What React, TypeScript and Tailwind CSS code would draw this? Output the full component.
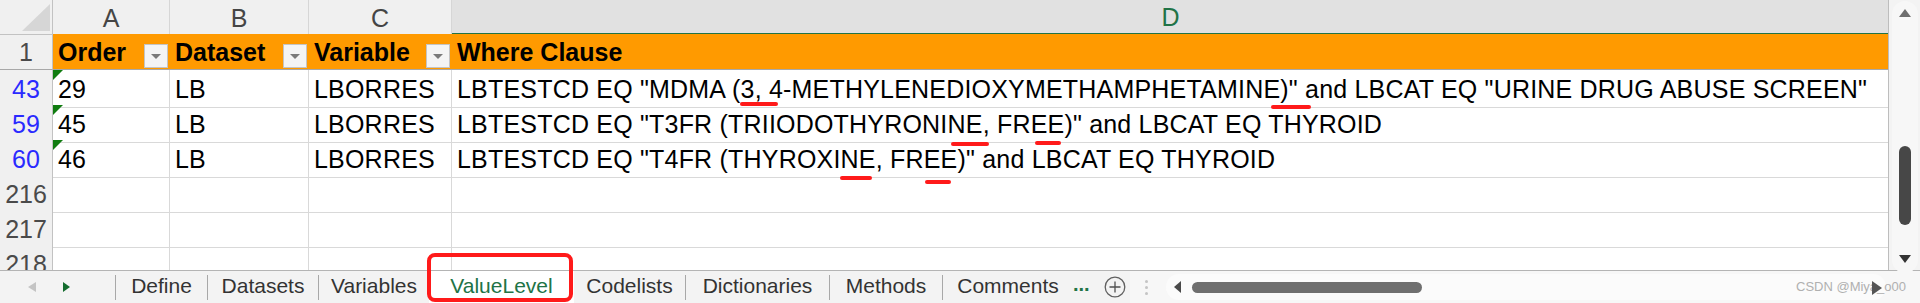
import React from "react";

const FONT = { fontFamily: '"Liberation Sans", Arial, sans-serif' };

function FilterBtn() {
  return (
    <div className="absolute right-[2px] top-[10px] w-[24px] h-[24px] bg-[#f4f4f4] border border-[#c4c4c4] flex items-center justify-center">
      <div className="w-0 h-0 border-l-[5px] border-r-[5px] border-t-[5px] border-l-transparent border-r-transparent border-t-[#7a7a7a] mt-[1px]" />
    </div>
  );
}

function GreenTri() {
  return (
    <div className="absolute left-0 top-0 w-0 h-0 border-t-[10px] border-r-[10px] border-t-[#107c10] border-r-transparent" />
  );
}

const GRID = "grid grid-cols-[53px_117px_139px_143px_1437px]";

type Row = { n: string; blue?: boolean; cells?: string[]; tri?: boolean };

const rows: Row[] = [
  {
    n: "43",
    blue: true,
    tri: true,
    cells: [
      "29",
      "LB",
      "LBORRES",
      'LBTESTCD EQ "MDMA (3, 4-METHYLENEDIOXYMETHAMPHETAMINE)" and LBCAT EQ "URINE DRUG ABUSE SCREEN"',
    ],
  },
  {
    n: "59",
    blue: true,
    tri: true,
    cells: ["45", "LB", "LBORRES", 'LBTESTCD EQ "T3FR (TRIIODOTHYRONINE, FREE)" and LBCAT EQ THYROID'],
  },
  {
    n: "60",
    blue: true,
    tri: true,
    cells: ["46", "LB", "LBORRES", 'LBTESTCD EQ "T4FR (THYROXINE, FREE)" and LBCAT EQ THYROID'],
  },
  { n: "216" },
  { n: "217" },
  { n: "218" },
];

function DataRow({ r, last }: { r: Row; last?: boolean }) {
  const h = last ? "h-[25px]" : "h-[35px]";
  return (
    <div className={`${GRID} ${h} shrink-0`}>
      <div
        className={`border-r border-b border-[#c2c2c2] bg-[#f0f0f0] text-center pt-[2px] leading-[35px] text-[25px] ${
          r.blue ? "text-[#2a2aff]" : "text-[#4a4a4a]"
        }`}
      >
        {r.n}
      </div>
      {[0, 1, 2, 3].map((i) => (
        <div
          key={i}
          className="relative border-r border-b border-[#d9d9d9] pl-[5px] pt-[2px] leading-[35px] text-[25px] tracking-[0.2px] text-black whitespace-nowrap overflow-visible"
        >
          {i === 0 && r.tri ? <GreenTri /> : null}
          {r.cells ? r.cells[i] : ""}
        </div>
      ))}
    </div>
  );
}

function Tab({ w, label, active }: { w: string; label: string; active?: boolean }) {
  return (
    <div
      className={`${w} h-full flex items-center justify-center text-[21px] pb-[2px] shrink-0 ${
        active ? "bg-white text-[#217346]" : "text-[#333]"
      }`}
    >
      {label}
    </div>
  );
}

function Sep() {
  return <div className="w-[1px] h-[25px] bg-[#a8a8a8] self-center shrink-0" />;
}

export default function App() {
  return (
    <div className="relative w-[1920px] h-[303px] overflow-hidden bg-white flex flex-col" style={FONT}>
      <div className="flex h-[270px] shrink-0">
        {/* grid */}
        <div className="w-[1889px] flex flex-col border-r border-[#bdbdbd] overflow-hidden">
          {/* column headers */}
          <div className={`${GRID} h-[34px] shrink-0`}>
            <div className="relative bg-[#f0f0f0] border-r border-b border-[#c2c2c2]">
              <svg className="absolute left-[22px] top-[4px]" width="28" height="27" viewBox="0 0 28 27">
                <polygon points="28,0 28,27 0,27" fill="#d6d6d6" />
              </svg>
            </div>
            {["A", "B", "C"].map((c) => (
              <div
                key={c}
                className="bg-[#f0f0f0] border-r border-b border-r-[#d6d6d6] border-b-[#ababab] text-center text-[25px] text-[#454545] pt-[3px] leading-[31px]"
              >
                {c}
              </div>
            ))}
            <div className="bg-[#e1e1e1] border-b-2 border-[#217346] text-center text-[25px] text-[#217346] pt-[3px] leading-[29px]">
              D
            </div>
          </div>
          {/* header row 1 */}
          <div className={`${GRID} h-[36px] shrink-0`}>
            <div className="bg-[#f0f0f0] border-r border-b border-r-[#c2c2c2] border-b-[#a8a8a8] text-center pt-[2px] leading-[33px] text-[25px] text-[#4a4a4a]">
              1
            </div>
            {["Order", "Dataset", "Variable", "Where Clause"].map((t, i) => (
              <div
                key={t}
                className="relative bg-[#ff9a00] border-b border-[#a8a8a8] pl-[5px] pt-[2px] leading-[33px] text-[25px] font-bold text-black whitespace-nowrap"
              >
                {t}
                {i < 3 ? <FilterBtn /> : null}
              </div>
            ))}
          </div>
          {rows.map((r, i) => (
            <DataRow key={r.n} r={r} last={i === rows.length - 1} />
          ))}
        </div>
        {/* vertical scrollbar */}
        <div className="relative w-[31px] h-full bg-[#f3f3f3] flex justify-center">
          <div className="relative w-[26px] h-[272px] mt-[1px] rounded-full bg-[#f7f7f7]">
            <div className="absolute left-[7px] top-[8px] w-0 h-0 border-l-[6px] border-r-[6px] border-b-[8px] border-l-transparent border-r-transparent border-b-[#6e6e6e]" />
            <div className="absolute left-[7px] top-[145px] w-[12px] h-[79px] rounded-full bg-[#474747]" />
            <div className="absolute left-[7px] top-[254px] w-0 h-0 border-l-[6px] border-r-[6px] border-t-[8px] border-l-transparent border-r-transparent border-t-[#333]" />
          </div>
        </div>
      </div>

      {/* tab bar */}
      <div className="flex h-[33px] bg-[#f3f3f3] border-t border-[#b4b4b4] shrink-0 items-stretch">
        <div className="w-[115px] h-full flex items-center shrink-0">
          <div className="ml-[28px] w-0 h-0 border-t-[5px] border-b-[5px] border-r-[8px] border-t-transparent border-b-transparent border-r-[#c4c4c4]" />
          <div className="ml-[27px] w-0 h-0 border-t-[5px] border-b-[5px] border-l-[7px] border-t-transparent border-b-transparent border-l-[#146c2e]" />
        </div>
        <Sep />
        <Tab w="w-[91px]" label="Define" />
        <Sep />
        <Tab w="w-[110px]" label="Datasets" />
        <Sep />
        <Tab w="w-[110px]" label="Variables" />
        <Tab w="w-[145px]" label="ValueLevel" active />
        <Tab w="w-[111px]" label="Codelists" />
        <Sep />
        <Tab w="w-[143px]" label="Dictionaries" />
        <Sep />
        <Tab w="w-[112px]" label="Methods" />
        <Sep />
        <Tab w="w-[130px]" label="Comments" />
        <div className="h-full flex items-center text-[20px] font-bold text-[#217346] pb-[6px] w-[27px] shrink-0">...</div>
        <div className="w-[30px] h-full flex items-center justify-center shrink-0">
          <svg width="22" height="22" viewBox="0 0 22 22">
            <circle cx="11" cy="11" r="9.8" fill="none" stroke="#606060" strokeWidth="1.3" />
            <path d="M11 5.5v11M5.5 11h11" stroke="#505050" strokeWidth="1.3" />
          </svg>
        </div>
        <div className="flex-1 h-full bg-[#f7f7f7] flex items-center">
          <div className="ml-[15px] flex flex-col gap-[3px]">
            <div className="w-[3px] h-[3px] rounded-full bg-[#c4c4c4]" />
            <div className="w-[3px] h-[3px] rounded-full bg-[#c4c4c4]" />
            <div className="w-[3px] h-[3px] rounded-full bg-[#c4c4c4]" />
          </div>
          <div className="ml-[18px] h-[26px] w-[720px] rounded-full bg-[#fbfbfb] flex items-center">
            <div className="ml-[8px] w-0 h-0 border-t-[6px] border-b-[6px] border-r-[7px] border-t-transparent border-b-transparent border-r-[#4a4a4a]" />
            <div className="ml-[11px] w-[230px] h-[11px] rounded-full bg-[#6f6f6f]" />
          </div>
        </div>
      </div>

      {/* overlays: watermark and annotations */}
      <div className="absolute left-[1796px] top-[279px] text-[13px] leading-[16px] text-[#b0b0b0] whitespace-nowrap">
        CSDN @Miya_o00
      </div>
      <div className="absolute left-[1872px] top-[281px] w-0 h-0 border-t-[7px] border-b-[7px] border-l-[10px] border-t-transparent border-b-transparent border-l-[#555]" />

      <div className="absolute left-[427px] top-[253px] w-[146px] h-[49px] border-[4px] border-[#ff1a1a] rounded-[8px]" />

      <div className="absolute left-[740px] top-[102px] w-[38px] h-[4px] rounded-full bg-[#ff1a1a]" />
      <div className="absolute left-[1271px] top-[105px] w-[40px] h-[4px] rounded-full bg-[#ff1a1a]" />
      <div className="absolute left-[951px] top-[142px] w-[38px] h-[4px] rounded-full bg-[#ff1a1a]" />
      <div className="absolute left-[1035px] top-[141px] w-[26px] h-[4px] rounded-full bg-[#ff1a1a]" />
      <div className="absolute left-[840px] top-[176px] w-[32px] h-[4px] rounded-full bg-[#ff1a1a]" />
      <div className="absolute left-[925px] top-[180px] w-[26px] h-[4px] rounded-full bg-[#ff1a1a]" />
    </div>
  );
}
